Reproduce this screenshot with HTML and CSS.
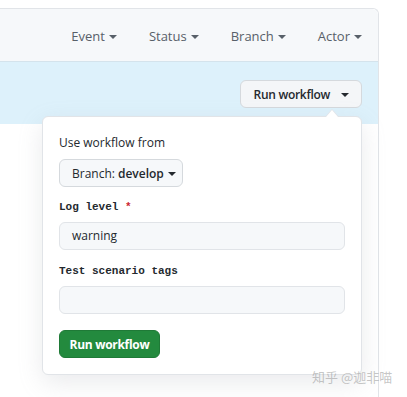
FILE: index.html
```html
<!DOCTYPE html>
<html lang="en">
<head>
    <meta charset="UTF-8">
    <meta name="viewport" content="width=device-width, initial-scale=1.0">
    <title>Workflow runs</title>
    <link rel="stylesheet" href="styles.css">
</head>
<body>
    <div class="panel">
        <div class="filters">
            <span class="filter">Event <i class="caret"></i></span>
            <span class="filter">Status <i class="caret"></i></span>
            <span class="filter">Branch <i class="caret"></i></span>
            <span class="filter">Actor <i class="caret"></i></span>
        </div>

        <div class="banner">
            <button class="btn">Run workflow <i class="caret dark"></i></button>

            <div class="dropdown">
                <p class="label">Use workflow from</p>
                <button class="btn branch">Branch: <b>develop</b> <i class="caret dark"></i></button>

                <p class="field-name">Log level <span class="required">*</span></p>
                <div class="input">warning</div>

                <p class="field-name">Test scenario tags</p>
                <div class="input"></div>

                <button class="btn-primary">Run workflow</button>
            </div>
        </div>
    </div>

    <div class="watermark">知乎 @迦非喵</div>
</body>
</html>
```

FILE: styles.css
```css
* {
    margin: 0;
    padding: 0;
    box-sizing: border-box;
}

body {
    font-family: "Open Sans", "Noto Sans", sans-serif;
    background: #fff;
    color: #24292e;
    height: 397px;
    overflow: hidden;
}

.panel {
    margin: 8px 28px 0 -20px;
    height: 389px;
    border: 1px solid #e1e4e8;
    border-bottom: none;
    border-radius: 6px 6px 0 0;
}

.filters {
    display: flex;
    justify-content: flex-end;
    align-items: center;
    gap: 32px;
    height: 53px;
    padding: 2px 16px 0 0;
    background: #f6f8fa;
    border-bottom: 1px solid #d4e3ec;
    border-radius: 6px 6px 0 0;
}

.filter {
    font-size: 13px;
    color: #586069;
    display: flex;
    align-items: center;
    gap: 4px;
}

.caret {
    display: inline-block;
    width: 0;
    height: 0;
    border-left: 4px solid transparent;
    border-right: 4px solid transparent;
    border-top: 4px solid #586069;
    margin-top: 2px;
}

.caret.dark {
    border-top-color: #24292e;
}

.banner {
    position: relative;
    display: flex;
    justify-content: flex-end;
    height: 62px;
    padding: 18px 16px 0 0;
    background: #ddf1fb;
}

.btn {
    display: flex;
    align-items: center;
    gap: 11px;
    height: 28px;
    padding: 0 12px 0 13px;
    font-family: inherit;
    font-size: 12px;
    font-weight: 600;
    letter-spacing: -0.3px;
    color: #24292e;
    background: #f4f6f8;
    border: 1px solid #d5d9dd;
    border-radius: 6px;
}

.dropdown {
    position: absolute;
    top: 54px;
    right: 16px;
    width: 320px;
    padding: 16px;
    background: #fff;
    border: 1px solid #e1e4e8;
    border-radius: 6px;
    box-shadow: 0 8px 24px rgba(149, 157, 165, 0.2);
}

.dropdown::before {
    content: "";
    position: absolute;
    top: -8px;
    right: 22px;
    border-left: 7px solid transparent;
    border-right: 7px solid transparent;
    border-bottom: 8px solid #e1e4e8;
}

.dropdown::after {
    content: "";
    position: absolute;
    top: -7px;
    right: 23px;
    border-left: 6px solid transparent;
    border-right: 6px solid transparent;
    border-bottom: 7px solid #fff;
}

.label {
    font-size: 12px;
    line-height: 20px;
    margin-bottom: 6px;
}

.btn.branch {
    font-weight: 400;
    letter-spacing: 0;
    gap: 4px;
    width: 124px;
    padding: 0 12px;
    background: #f6f8fa;
}

.btn.branch b {
    font-weight: 600;
    margin-left: -1px;
}

.field-name {
    font-family: "Liberation Mono", "DejaVu Sans Mono", monospace;
    font-size: 11px;
    font-weight: 700;
    line-height: 18px;
    margin: 11px 0 6px;
}

.field-name + .input + .field-name {
    margin-top: 12px;
}

.required {
    color: #cb2431;
}

.input {
    height: 28px;
    padding: 0 12px;
    font-size: 12px;
    line-height: 26px;
    color: #24292e;
    background: #f6f8fa;
    border: 1px solid #e1e4e8;
    border-radius: 6px;
}

.btn-primary {
    display: block;
    margin-top: 16px;
    height: 28px;
    width: 101px;
    font-family: inherit;
    font-size: 12px;
    font-weight: 700;
    letter-spacing: -0.3px;
    color: #fff;
    background: #238a3e;
    border: 1px solid #1f7a37;
    border-radius: 6px;
}

.watermark {
    position: absolute;
    left: 312px;
    top: 367px;
    font-family: "Noto Sans CJK SC", sans-serif;
    font-size: 13px;
    color: rgba(150, 150, 150, 0.55);
}
```
